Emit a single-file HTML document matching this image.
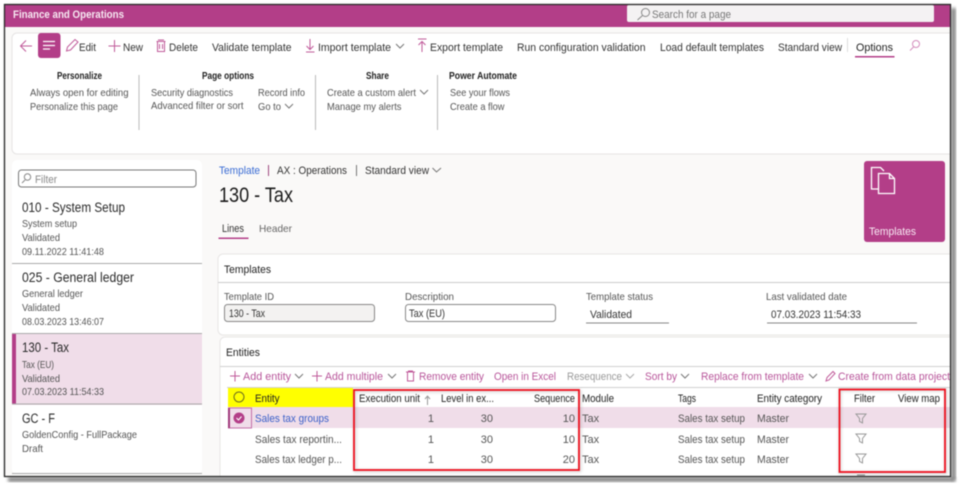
<!DOCTYPE html>
<html><head><meta charset="utf-8"><title>Finance and Operations</title>
<style>
html,body{margin:0;padding:0;background:#fff;width:964px;height:490px;overflow:hidden}
svg{display:block;filter:blur(.4px)}
text{font-family:"Liberation Sans",sans-serif;font-size:11px;fill:#444}
.b{font-weight:bold;fill:#222;font-size:10px}
.h{font-size:11px;fill:#333}
.t{font-size:13.500px;fill:#2b2b2b}
.g{fill:#555;font-size:10.500px}
.i{fill:none;stroke:#c05a9a;stroke-width:1}
.k{fill:none;stroke:#777;stroke-width:1}
</style></head><body>
<svg width="964" height="490" viewBox="0 0 964 490" xmlns="http://www.w3.org/2000/svg">
<defs><filter id="s" x="-5%" y="-5%" width="110%" height="115%"><feGaussianBlur stdDeviation="3"/></filter>
<filter id="r" x="-5%" y="-5%" width="110%" height="115%"><feGaussianBlur stdDeviation="1.5"/></filter></defs>
<rect x="8" y="8" width="946" height="473" fill="#555" filter="url(#s)"/>
<rect x="5" y="5" width="945.500" height="471" fill="#faf9f8"/>
<!-- header -->
<rect x="5" y="5" width="945" height="22" fill="#b33e88"/>
<text x="13" y="18" textLength="111" lengthAdjust="spacingAndGlyphs" style="font-weight:bold;font-size:11px;fill:#f7e9f2">Finance and Operations</text>
<rect x="627" y="5" width="307" height="17" rx="2" fill="#f4f2f3"/>
<circle cx="645.500" cy="12.500" r="4" fill="none" stroke="#888"/><path d="M642.500 15.500L637.500 20" stroke="#888"/>
<text x="652" y="18" textLength="79" lengthAdjust="spacingAndGlyphs" style="fill:#777;font-size:11px">Search for a page</text>
<!-- ribbon -->
<rect x="12" y="33" width="945" height="121" rx="5" fill="#fff" stroke="#e6e4e4"/>
<path class="i" d="M32 46H21M26 40.500L20.500 46L26 51.500"/>
<rect x="38" y="33" width="22.500" height="25" rx="3" fill="#b33e88"/>
<path d="M43 41.500H55M43 45.500H55M43 49H50" stroke="#fff" stroke-width="1.300" fill="none"/>
<path class="i" d="M66.500 51L67.500 47L75 39.500L78 42L70.500 50Z"/>
<text class="h" x="79" y="51" textLength="17" lengthAdjust="spacingAndGlyphs">Edit</text>
<path class="i" d="M114.500 40V52M108.500 46H120.500"/>
<text class="h" x="123" y="51" textLength="20" lengthAdjust="spacingAndGlyphs">New</text>
<path class="i" d="M156.500 41.500H165.500M158 40H164M157.500 41.500V51.500H164.500V41.500M159.500 44V49M162.500 44V49"/>
<text class="h" x="169" y="51" textLength="29" lengthAdjust="spacingAndGlyphs">Delete</text>
<text class="h" x="212" y="51" textLength="79.500" lengthAdjust="spacingAndGlyphs">Validate template</text>
<path class="i" d="M310 39V49M306.500 46L310 49.500L313.500 46M306 52H314.500"/>
<text class="h" x="318" y="51" textLength="73" lengthAdjust="spacingAndGlyphs">Import template</text>
<path class="k" d="M396 44L400 48L404 44"/>
<path class="i" d="M422 42V52M418.500 45L422 41.500L425.500 45M418 39H426.500"/>
<text class="h" x="430" y="51" textLength="73" lengthAdjust="spacingAndGlyphs">Export template</text>
<text class="h" x="517" y="51" textLength="128.500" lengthAdjust="spacingAndGlyphs">Run configuration validation</text>
<text class="h" x="660" y="51" textLength="104" lengthAdjust="spacingAndGlyphs">Load default templates</text>
<text class="h" x="778" y="51" textLength="64" lengthAdjust="spacingAndGlyphs">Standard view</text>
<path d="M847.500 38V52" stroke="#ddd"/>
<text class="h" x="856" y="51" textLength="37" lengthAdjust="spacingAndGlyphs" style="fill:#222">Options</text>
<rect x="855" y="56" width="39.500" height="1.500" fill="#b33e88"/>
<circle cx="916" cy="44" r="3.500" class="i" style="stroke:#d48cbc"/><path class="i" style="stroke:#d48cbc" d="M913.500 47L910 50.500"/>
<text class="b" x="57" y="79" textLength="45" lengthAdjust="spacingAndGlyphs">Personalize</text>
<text class="b" x="202" y="79" textLength="52" lengthAdjust="spacingAndGlyphs">Page options</text>
<text class="b" x="366" y="79" textLength="23" lengthAdjust="spacingAndGlyphs">Share</text>
<text class="b" x="449" y="79" textLength="68" lengthAdjust="spacingAndGlyphs">Power Automate</text>
<text class="g" x="30" y="96" textLength="98.500" lengthAdjust="spacingAndGlyphs">Always open for editing</text>
<text class="g" x="30" y="110" textLength="88" lengthAdjust="spacingAndGlyphs">Personalize this page</text>
<text class="g" x="151" y="96" textLength="82" lengthAdjust="spacingAndGlyphs">Security diagnostics</text>
<text class="g" x="151" y="109" textLength="92.500" lengthAdjust="spacingAndGlyphs">Advanced filter or sort</text>
<text class="g" x="258" y="96" textLength="47" lengthAdjust="spacingAndGlyphs">Record info</text>
<text class="g" x="258" y="110" textLength="23" lengthAdjust="spacingAndGlyphs">Go to</text>
<path class="k" d="M285 104L289 108L293 104"/>
<text class="g" x="327" y="96" textLength="89" lengthAdjust="spacingAndGlyphs">Create a custom alert</text>
<path class="k" d="M420 90L424 94L428 90"/>
<text class="g" x="327" y="110" textLength="74.500" lengthAdjust="spacingAndGlyphs">Manage my alerts</text>
<text class="g" x="450" y="96" textLength="60" lengthAdjust="spacingAndGlyphs">See your flows</text>
<text class="g" x="450" y="110" textLength="54.500" lengthAdjust="spacingAndGlyphs">Create a flow</text>
<path d="M139 75V130M315.500 75V130M437.500 75V130" stroke="#bbb" stroke-width="1"/>
<!-- left panel -->
<rect x="12" y="160" width="190" height="314" rx="5" fill="#fff"/>
<rect x="18.500" y="170" width="177.500" height="17" rx="3" fill="#fff" stroke="#777"/>
<circle cx="27.500" cy="177" r="3.200" fill="none" stroke="#888"/><path d="M25 180L22 183" stroke="#888"/>
<text x="35" y="183" textLength="22" lengthAdjust="spacingAndGlyphs" style="fill:#888">Filter</text>
<text class="t" x="22" y="212" textLength="103" lengthAdjust="spacingAndGlyphs">010 - System Setup</text>
<text class="g" x="22" y="227" textLength="55" lengthAdjust="spacingAndGlyphs">System setup</text>
<text class="g" x="22" y="241" textLength="38" lengthAdjust="spacingAndGlyphs">Validated</text>
<text class="g" x="22" y="255" textLength="82" lengthAdjust="spacingAndGlyphs">09.11.2022 11:41:48</text>
<path d="M12 263.500H202" stroke="#aaa"/>
<text class="t" x="22" y="282" textLength="112" lengthAdjust="spacingAndGlyphs">025 - General ledger</text>
<text class="g" x="22" y="297" textLength="61" lengthAdjust="spacingAndGlyphs">General ledger</text>
<text class="g" x="22" y="311" textLength="38" lengthAdjust="spacingAndGlyphs">Validated</text>
<text class="g" x="22" y="325" textLength="82" lengthAdjust="spacingAndGlyphs">08.03.2023 13:46:07</text>
<rect x="12" y="333" width="190" height="72" fill="#f0dde9"/>
<rect x="12" y="334" width="4" height="70" fill="#b33e88"/>
<path d="M12 333.500H202M12 404H202" stroke="#aaa"/>
<text class="t" x="22" y="352" textLength="47" lengthAdjust="spacingAndGlyphs">130 - Tax</text>
<text class="g" x="22" y="368" textLength="32" lengthAdjust="spacingAndGlyphs">Tax (EU)</text>
<text class="g" x="22" y="382" textLength="38" lengthAdjust="spacingAndGlyphs">Validated</text>
<text class="g" x="22" y="395" textLength="82" lengthAdjust="spacingAndGlyphs">07.03.2023 11:54:33</text>
<text class="t" x="22" y="423" textLength="33" lengthAdjust="spacingAndGlyphs">GC - F</text>
<text class="g" x="22" y="438" textLength="115" lengthAdjust="spacingAndGlyphs">GoldenConfig - FullPackage</text>
<text class="g" x="22" y="452" textLength="21" lengthAdjust="spacingAndGlyphs">Draft</text>
<path d="M12 473.500H202" stroke="#aaa"/>
<!-- page title -->
<text x="219" y="174" textLength="41" lengthAdjust="spacingAndGlyphs" class="h" style="fill:#3a6cd4">Template</text>
<rect x="268" y="165" width="1" height="11" fill="#a04a80"/>
<text class="h" x="277" y="174" textLength="70" lengthAdjust="spacingAndGlyphs">AX : Operations</text>
<rect x="356" y="165" width="1" height="11" fill="#777"/>
<text class="h" x="365" y="174" textLength="64" lengthAdjust="spacingAndGlyphs">Standard view</text>
<path class="k" d="M432.500 168L436.500 172L441 168"/>
<text x="219" y="202" textLength="74" lengthAdjust="spacingAndGlyphs" style="font-size:21px;fill:#1a1a1a">130 - Tax</text>
<text class="h" x="222" y="232" textLength="22" lengthAdjust="spacingAndGlyphs">Lines</text>
<text class="g" x="259" y="232" textLength="33" lengthAdjust="spacingAndGlyphs" style="fill:#666">Header</text>
<rect x="218.500" y="237.500" width="30" height="1.500" fill="#b33e88"/>
<rect x="864" y="161" width="81" height="81" rx="3" fill="#b33e88"/>
<path d="M878 189H871.500V167.500H880.500L884 171M878.500 173.500H889.500L894.500 178.500V193.500H878.500ZM889.500 173.500V178.500H894.500" fill="none" stroke="#fff" stroke-width="1.300"/>
<text x="869" y="235" textLength="47" lengthAdjust="spacingAndGlyphs" style="fill:#f8e9f3">Templates</text>
<!-- Templates card -->
<rect x="218" y="254" width="740" height="81" rx="5" fill="#fff" stroke="#e8e6e5"/>
<text class="h" x="224" y="273" textLength="47" lengthAdjust="spacingAndGlyphs" style="fill:#222">Templates</text>
<path d="M218 282.500H950" stroke="#ccc"/>
<text class="g" x="224" y="300" textLength="50" lengthAdjust="spacingAndGlyphs">Template ID</text>
<rect x="224.500" y="304.500" width="150" height="17" rx="3" fill="#f3f2f1" stroke="#888"/>
<text class="h" x="229" y="317" textLength="36" lengthAdjust="spacingAndGlyphs">130 - Tax</text>
<text class="g" x="405" y="300" textLength="49" lengthAdjust="spacingAndGlyphs">Description</text>
<rect x="405.500" y="304.500" width="150" height="17" rx="3" fill="#fff" stroke="#888"/>
<text class="h" x="409" y="317" textLength="36" lengthAdjust="spacingAndGlyphs">Tax (EU)</text>
<text class="g" x="586" y="300" textLength="67" lengthAdjust="spacingAndGlyphs">Template status</text>
<text class="h" x="590" y="318" textLength="42" lengthAdjust="spacingAndGlyphs">Validated</text>
<path d="M586 323H669M767 323H917" stroke="#888" stroke-width="1"/>
<text class="g" x="766" y="300" textLength="81" lengthAdjust="spacingAndGlyphs">Last validated date</text>
<text class="h" x="771" y="318" textLength="90" lengthAdjust="spacingAndGlyphs">07.03.2023 11:54:33</text>
<!-- Entities card -->
<rect x="220" y="337" width="740" height="150" rx="5" fill="#fff" stroke="#e8e6e5"/>
<text class="h" x="226" y="356" textLength="34" lengthAdjust="spacingAndGlyphs" style="fill:#222">Entities</text>
<path d="M220 366.500H950M227 387.500H950" stroke="#d0d0d0"/>
<path class="i" d="M235 371V381.500M230 376H240M317 371V381.500M312 376H322"/>
<text class="h" x="243" y="380" textLength="48" lengthAdjust="spacingAndGlyphs" style="fill:#b8559a">Add entity</text>
<path class="k" d="M295 374L299 378L303 374M388 374L392 378L396 374"/>
<text class="h" x="325" y="380" textLength="58" lengthAdjust="spacingAndGlyphs" style="fill:#b8559a">Add multiple</text>
<path class="i" d="M406 372H415M408 371H413M407.500 372V381H413.500V372"/>
<text class="h" x="419" y="380" textLength="65" lengthAdjust="spacingAndGlyphs" style="fill:#b8559a">Remove entity</text>
<text class="h" x="494" y="380" textLength="62" lengthAdjust="spacingAndGlyphs" style="fill:#b8559a">Open in Excel</text>
<text class="h" x="567" y="380" textLength="55" lengthAdjust="spacingAndGlyphs" style="fill:#999">Resequence</text>
<path d="M626 374L630 378L634 374" fill="none" stroke="#aaa"/>
<text class="h" x="645" y="380" textLength="32" lengthAdjust="spacingAndGlyphs" style="fill:#b8559a">Sort by</text>
<path class="k" d="M681 374L685 378L689 374M809 374L813 378L817 374"/>
<text class="h" x="701" y="380" textLength="103" lengthAdjust="spacingAndGlyphs" style="fill:#b8559a">Replace from template</text>
<path class="i" d="M826 381L827 377.500L833 371.500L835 373.500L829 380Z"/>
<text class="h" x="838" y="380" textLength="112" lengthAdjust="spacingAndGlyphs" style="fill:#b8559a">Create from data project</text>
<!-- grid -->
<rect x="228" y="388" width="125" height="19" fill="#ffff00"/>
<circle cx="239" cy="397" r="5" fill="none" stroke="#6d6d20"/>
<text class="h" x="255" y="402" textLength="24.500" lengthAdjust="spacingAndGlyphs" style="fill:#222">Entity</text>
<text class="h" x="359" y="402" textLength="61" lengthAdjust="spacingAndGlyphs" style="fill:#222">Execution unit</text>
<path d="M427.500 397V405M425 399L427.500 396L430 399" fill="none" stroke="#999"/>
<text class="h" x="441" y="402" textLength="53" lengthAdjust="spacingAndGlyphs" style="fill:#222">Level in ex...</text>
<text class="h" x="534" y="402" textLength="41" lengthAdjust="spacingAndGlyphs" style="fill:#222">Sequence</text>
<text class="h" x="582" y="402" textLength="32" lengthAdjust="spacingAndGlyphs" style="fill:#222">Module</text>
<text class="h" x="678" y="402" textLength="18" lengthAdjust="spacingAndGlyphs" style="fill:#222">Tags</text>
<text class="h" x="757" y="402" textLength="65" lengthAdjust="spacingAndGlyphs" style="fill:#222">Entity category</text>
<text class="h" x="854" y="402" textLength="21" lengthAdjust="spacingAndGlyphs" style="fill:#222">Filter</text>
<text class="h" x="898" y="402" textLength="42" lengthAdjust="spacingAndGlyphs" style="fill:#222">View map</text>
<rect x="228" y="407" width="722" height="21" fill="#f0dde9"/>
<rect x="228.500" y="408" width="23" height="20" fill="#f0dde9" stroke="#c46fa8"/>
<rect x="228" y="408" width="2" height="20" fill="#a03a7c"/>
<circle cx="239" cy="418" r="5.500" fill="#b33e88"/>
<path d="M236.500 418L238.500 420L241.500 416.500" fill="none" stroke="#fff" stroke-width="1.100"/>
<text class="h" x="255" y="422" textLength="74" lengthAdjust="spacingAndGlyphs" style="fill:#3a5fc8">Sales tax groups</text>
<text class="h" x="255" y="443" textLength="87" lengthAdjust="spacingAndGlyphs" style="fill:#555">Sales tax reportin...</text>
<text class="h" x="255" y="463" textLength="87" lengthAdjust="spacingAndGlyphs" style="fill:#555">Sales tax ledger p...</text>
<g text-anchor="end">
<text class="h" x="434" y="422" style="fill:#555">1</text><text class="h" x="493" y="422" style="fill:#555">30</text><text class="h" x="575" y="422" style="fill:#555">10</text>
<text class="h" x="434" y="443" style="fill:#555">1</text><text class="h" x="493" y="443" style="fill:#555">30</text><text class="h" x="575" y="443" style="fill:#555">10</text>
<text class="h" x="434" y="463" style="fill:#555">1</text><text class="h" x="493" y="463" style="fill:#555">30</text><text class="h" x="575" y="463" style="fill:#555">20</text>
</g>
<text class="h" x="582" y="422" style="fill:#555">Tax</text><text class="h" x="582" y="443" style="fill:#555">Tax</text><text class="h" x="582" y="463" style="fill:#555">Tax</text>
<text class="h" x="678" y="422" textLength="67" lengthAdjust="spacingAndGlyphs" style="fill:#555">Sales tax setup</text>
<text class="h" x="678" y="443" textLength="67" lengthAdjust="spacingAndGlyphs" style="fill:#555">Sales tax setup</text>
<text class="h" x="678" y="463" textLength="67" lengthAdjust="spacingAndGlyphs" style="fill:#555">Sales tax setup</text>
<text class="h" x="757" y="422" textLength="32" lengthAdjust="spacingAndGlyphs" style="fill:#555">Master</text>
<text class="h" x="757" y="443" textLength="32" lengthAdjust="spacingAndGlyphs" style="fill:#555">Master</text>
<text class="h" x="757" y="463" textLength="32" lengthAdjust="spacingAndGlyphs" style="fill:#555">Master</text>
<path class="k" style="stroke:#999" d="M856 414H866L862.500 418.500V423L859.500 421.500V418.500ZM856 434H866L862.500 438.500V443L859.500 441.500V438.500ZM856 454H866L862.500 458.500V463L859.500 461.500V458.500Z"/>
<path d="M857 475H865" stroke="#888"/>
<!-- red boxes -->
<g fill="none">
<rect x="355" y="391" width="225" height="80" stroke="#666" stroke-width="2" opacity=".35" filter="url(#r)"/>
<rect x="840" y="390" width="106" height="83" stroke="#666" stroke-width="2" opacity=".35" filter="url(#r)"/>
<rect x="354" y="390" width="225" height="80" stroke="#ee0f1d" stroke-width="1.800"/>
<rect x="839.500" y="389.500" width="105.500" height="82.500" stroke="#ee0f1d" stroke-width="1.800"/>
</g>
<!-- outer frame masks -->
<rect x="951" y="0" width="13" height="490" fill="#fff"/>
<rect x="0" y="477" width="964" height="13" fill="#fff"/>
<rect x="951" y="8" width="5" height="472" fill="#888" filter="url(#r)"/>
<rect x="8" y="477" width="947" height="5" fill="#888" filter="url(#r)"/>
<rect x="4.500" y="4.500" width="946" height="472" fill="none" stroke="#2a2a2a" stroke-width="1.300"/>
</svg>
</body></html>
